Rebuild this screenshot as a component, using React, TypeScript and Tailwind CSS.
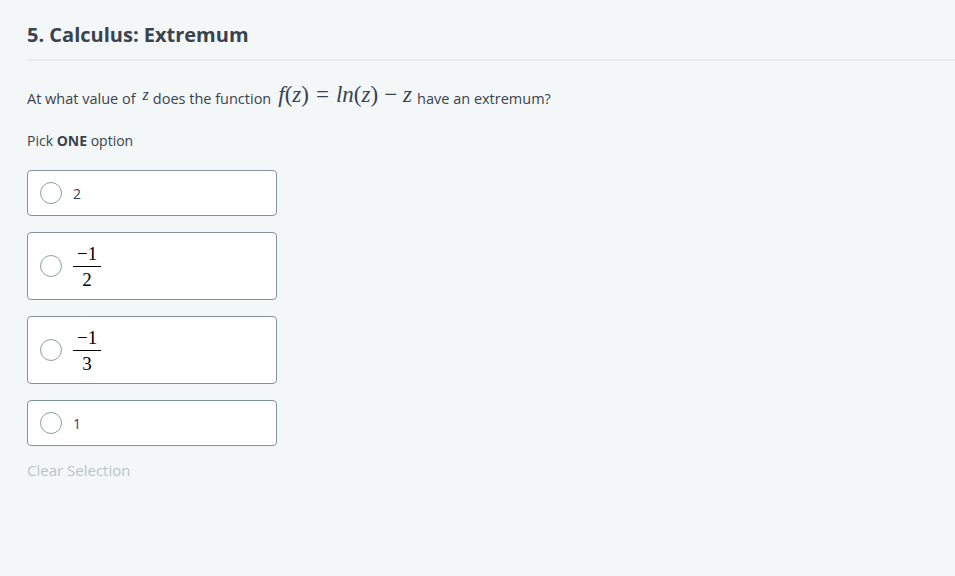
const sans = "font-['Open_Sans','Liberation_Sans',sans-serif]";
const math = "font-['Liberation_Serif','DejaVu_Serif',serif]";

function Fraction({ num, den }: { num: string; den: string }) {
  return (
    <span className={`${math} inline-flex flex-col items-center text-[19px] leading-none text-black`}>
      <span className="px-[4px] pb-[3px]">{num}</span>
      <span className="h-px w-full bg-black" />
      <span className="px-[4px] pt-[3px]">{den}</span>
    </span>
  );
}

function Option({ children, tall }: { children: React.ReactNode; tall?: boolean }) {
  return (
    <label
      className={`flex w-[250px] cursor-pointer items-center rounded-[4px] border border-[#7f9598] bg-white pl-[12px] ${
        tall ? "h-[68px]" : "h-[46px]"
      }`}
    >
      <span className="h-[22px] w-[22px] shrink-0 rounded-full border border-[#8aa1a5] bg-white" />
      <span className="ml-[11px] flex items-center">{children}</span>
    </label>
  );
}

export default function App() {
  return (
    <div className={`${sans} min-h-[576px] w-full bg-[#f3f7f7] text-[#39424e]`}>
      <div className="pl-[27px] pt-[22px]">
        <h1 className="text-[20px] font-bold leading-[26px] text-[#39424e]">5. Calculus: Extremum</h1>
      </div>
      <div className="ml-[27px] mt-[11px] h-[2px] bg-[#e6ecee]" />

      <div className="px-[27px]">
        <p className="mt-[22px] flex items-end text-[14.5px] leading-[22px]">
          <span>At what value of</span>
          <span className={`${math} ml-[7px] mr-[4px] mb-[7px] text-[16px] italic leading-none`}>z</span>
          <span>does the function</span>
          <span className={`${math} ml-[7px] mr-[5px] mb-[4px] flex items-baseline text-[23px] leading-none`}>
            <span>
              <i>f</i>(<i>z</i>)
            </span>
            <span className="mx-[7px]">=</span>
            <span>
              <i>ln</i>(<i>z</i>)
            </span>
            <span className="mx-[6px]">−</span>
            <i>z</i>
          </span>
          <span>have an extremum?</span>
        </p>

        <p className="mt-[21px] text-[14px] leading-[20px]">
          Pick <b>ONE</b> option
        </p>

        <div className="mt-[19px] flex flex-col gap-[16px]">
          <Option>
            <span className="text-[14px]">2</span>
          </Option>
          <Option tall>
            <Fraction num="−1" den="2" />
          </Option>
          <Option tall>
            <Fraction num="−1" den="3" />
          </Option>
          <Option>
            <span className="text-[14px] text-[#5d2a6b]">1</span>
          </Option>
        </div>

        <button className="mt-[14px] text-[15px] leading-[20px] text-[#b9c5c9]">Clear Selection</button>
      </div>
    </div>
  );
}
